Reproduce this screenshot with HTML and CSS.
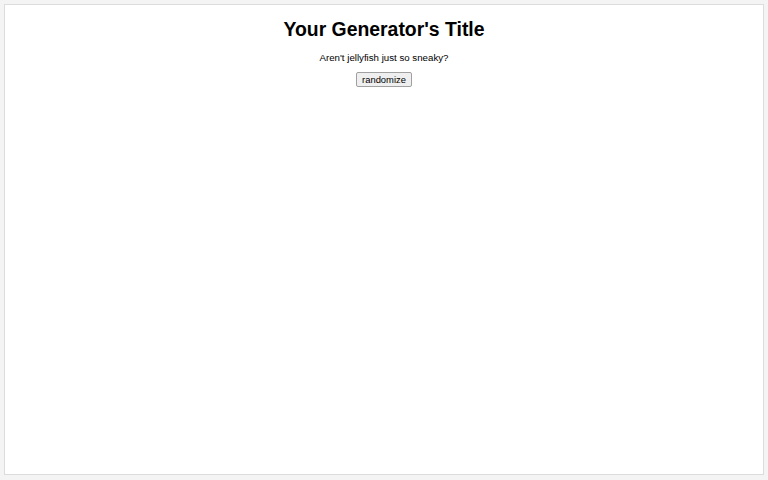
FILE: index.html
```html
<!DOCTYPE html>
<html>
<head>
<meta charset="utf-8">
<link rel="stylesheet" href="styles.css">
</head>
<body>
<div class="page">
  <h1 class="title">Your Generator's Title</h1>
  <p class="output">Aren't jellyfish just so sneaky?</p>
  <button class="btn">randomize</button>
</div>
</body>
</html>
```
FILE: styles.css
```css
html, body {
  margin: 0;
  padding: 0;
  height: 100%;
}
body {
  background: #f4f4f4;
  padding: 4px 4px 5px 4px;
  box-sizing: border-box;
  font-family: "Liberation Sans", Arial, sans-serif;
}
.page {
  background: #fff;
  border: 1px solid #dcdcdc;
  height: 100%;
  box-sizing: border-box;
  display: flex;
  flex-direction: column;
  align-items: center;
  text-align: center;
}
.title {
  font-size: 19.4px;
  font-weight: bold;
  margin: 13px 0 0 0;
  line-height: 22px;
  color: #000;
}
.output {
  font-size: 9.7px;
  margin: 12px 0 0 0;
  line-height: 12px;
  color: #000;
}
.btn {
  margin-top: 8px;
  font-family: "Liberation Sans", Arial, sans-serif;
  font-size: 9.4px;
  padding: 1px 5px;
  line-height: 11px;
  border: 1px solid #a0a0a0;
  border-radius: 2px;
  background: #efefef;
  color: #000;
}
```
